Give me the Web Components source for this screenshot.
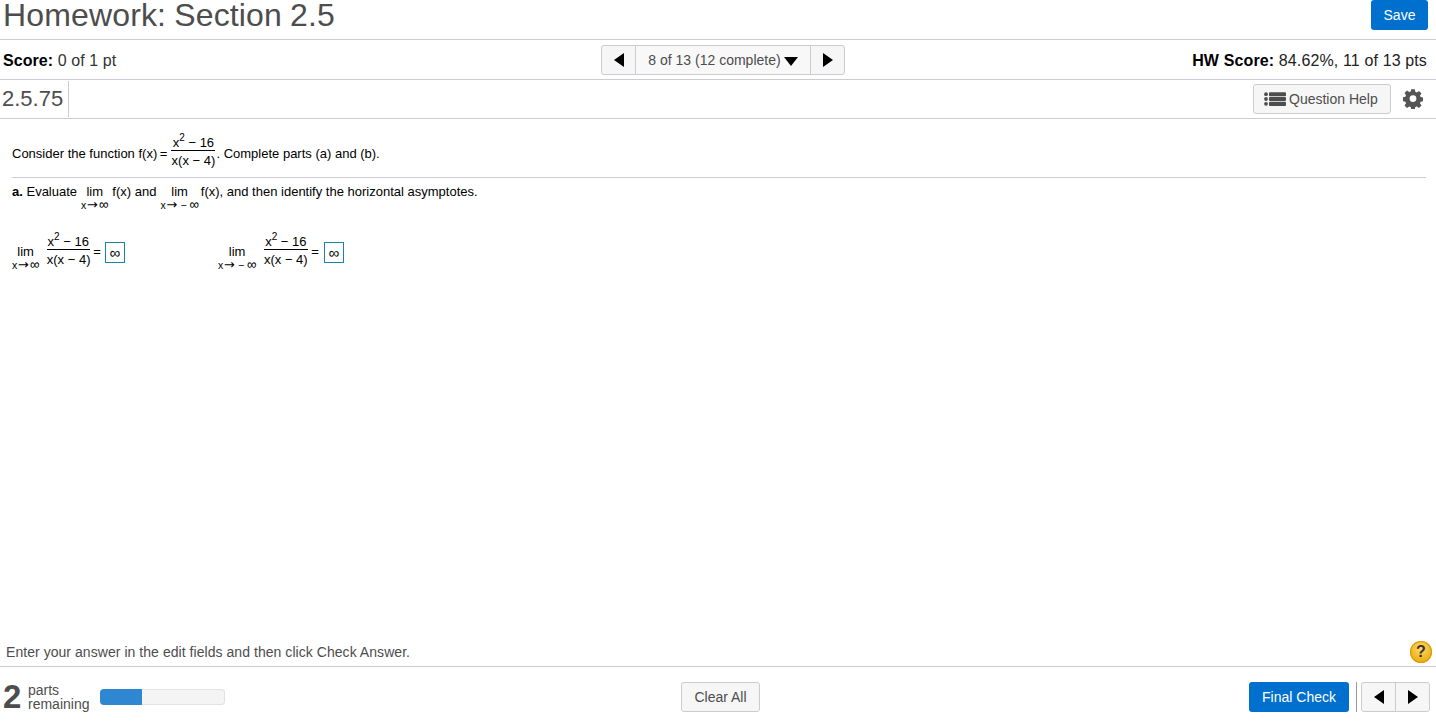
<!DOCTYPE html>
<html lang="en"><head><meta charset="utf-8"><title>Homework: Section 2.5</title>
<style>
html,body{margin:0;padding:0;height:100%;background:#fff;overflow:hidden}
body{font-family:"Liberation Sans",Arial,sans-serif;color:#000}
</style></head><body>
<hw-app>
  <hw-header title-text="Homework: Section 2.5"></hw-header>
  <hw-scorebar></hw-scorebar>
  <hw-qbar></hw-qbar>
  <hw-problem></hw-problem>
  <hw-instruction></hw-instruction>
  <hw-footer></hw-footer>
</hw-app>
<script>
const tri = {
  l:'<svg width="10" height="14" viewBox="0 0 10 14"><path d="M10 0V14L0 7Z" fill="#000"/></svg>',
  r:'<svg width="10" height="14" viewBox="0 0 10 14"><path d="M0 0V14L10 7Z" fill="#000"/></svg>',
  d:'<svg width="14" height="9" viewBox="0 0 14 9" style="margin-top:2px"><path d="M0 0H14L7 9Z" fill="#000"/></svg>'
};
function def(name, css, html){
  customElements.define(name, class extends HTMLElement{
    constructor(){super();this.attachShadow({mode:'open'});}
    connectedCallback(){
      const h = typeof html==='function'?html(this):html;
      this.shadowRoot.innerHTML='<style>'+css+'</style>'+h;
    }
  });
}
def('hw-app',':host{display:flex;flex-direction:column;height:727px;width:1436px}','<slot></slot>');
def('m-frac',`:host{display:inline-flex;flex-direction:column;align-items:stretch;text-align:center;width:44px;font-size:13px;line-height:15px;color:#000;flex:none}
 .n{border-bottom:1px solid #000;height:17px;display:flex;align-items:flex-end;justify-content:center;white-space:pre}
 .d{padding-top:2px;white-space:pre}
 sup{font-size:10px;line-height:0;vertical-align:6px}`,
 `<div class="n"><span>x<sup>2</sup> − 16</span></div><div class="d">x(x − 4)</div>`);
def('m-lim',`:host{display:inline-flex;flex-direction:column;align-items:center;font-size:13px;line-height:15px;height:15px;color:#000;flex:none}
 .s{font-size:10.5px;line-height:12px;height:17px;white-space:pre;display:flex;align-items:center}
 .i{font-size:13.5px;line-height:12px}
 .ar{font:13px/12px "DejaVu Sans",sans-serif;margin:0 1px 0 .5px}
 .mn{margin:0 2.5px;font-size:10.5px}`,
 t=>{const neg=t.hasAttribute('neg');return `<div>lim</div><div class="s"><span>x</span><span class="ar">→</span>${neg?'<span class="mn">−</span>':''}<span class="i">∞</span></div>`});
def('m-box',`:host{display:inline-flex;align-items:center;justify-content:center;box-sizing:border-box;width:20px;height:21px;border:1px solid #1583ad;font:15px "Liberation Sans",Arial,sans-serif;color:#000;flex:none;margin-top:6px}`,'∞');
def('hw-header',`:host{display:flex;align-items:flex-start;justify-content:space-between;height:39px;border-bottom:1px solid #c9ccd8;flex:none;padding:0 8px 0 3px}
 h1{margin:0;font-weight:400;font-size:32px;line-height:30px;color:#4d4d4d;letter-spacing:.15px;word-spacing:-1px;white-space:pre}
 button{font:14px "Liberation Sans",Arial,sans-serif;color:#fff;background:#0070cf;border:0;border-radius:3px;width:57px;height:30px;padding:0}`,
 t=>`<h1>${t.getAttribute('title-text')}</h1><button>Save</button>`);
def('hw-scorebar',`:host{display:grid;grid-template-columns:598px 244px 1fr;align-items:center;height:38px;padding-top:1px;border-bottom:1px solid #c9ccd8;flex:none;padding-right:9px;padding-left:3px;font-size:16px;color:#333}
 b{color:#000}
 .s{padding-top:1px;letter-spacing:.07px}
 .r{text-align:right;letter-spacing:.13px;color:#222;padding-top:1px}
 .nav{display:flex;height:30px;box-sizing:border-box;border:1px solid #ccc;border-radius:3px;background:#f6f6f6;font-size:14px;color:#4d4d4d}
 .nav>div{display:flex;align-items:center;justify-content:center}
 .a{width:33px}
 .m{flex:1;border-left:1px solid #ccc;border-right:1px solid #ccc;background:#f8f8f8;gap:3px}`,
 `<div class="s"><b>Score:</b> 0 of 1 pt</div>
 <div class="nav"><div class="a">${tri.l}</div><div class="m"><span>8 of 13 (12 complete)</span>${tri.d}</div><div class="a">${tri.r}</div></div>
 <div class="r"><b>HW Score:</b> 84.62%, 11 of 13 pts</div>`);
def('hw-qbar',`:host{display:flex;align-items:center;justify-content:space-between;height:38px;border-bottom:1px solid #c9ccd8;flex:none;padding:0 13px 0 2px}
 .id{font-size:22px;color:#4d4d4d;height:36px;line-height:36px;padding-right:5px;border-right:1px solid #ccc;align-self:flex-start;margin-top:1px}
 .right{display:flex;align-items:center;gap:12px}
 button{display:flex;align-items:center;gap:3px;box-sizing:border-box;width:138px;height:30px;padding:0 0 0 10px;font:14px "Liberation Sans",Arial,sans-serif;color:#4d4d4d;background:#f6f6f6;border:1px solid #ccc;border-radius:3px}`,
 `<div class="id">2.5.75</div><div class="right"><button>
 <svg width="22" height="14" viewBox="0 0 22 14" fill="#4d4d4d"><circle cx="2" cy="2.2" r="1.9"/><circle cx="2" cy="7" r="1.9"/><circle cx="2" cy="11.8" r="1.9"/><rect x="5" y="0.2" width="17" height="4.1" rx="1"/><rect x="5" y="5" width="17" height="4.1" rx="1"/><rect x="5" y="9.8" width="17" height="4.1" rx="1"/></svg>
 <span>Question Help</span></button>
 <svg width="20" height="20" viewBox="0 0 20 20"><path fill="#555" fill-rule="evenodd" d="M8.2 0.6h3.6l.5 2.6 1.5.6 2.2-1.5 2.5 2.5-1.5 2.2.6 1.5 2.6.5v3.6l-2.6.5-.6 1.5 1.5 2.2-2.5 2.5-2.2-1.5-1.5.6-.5 2.6H8.2l-.5-2.6-1.5-.6-2.2 1.5-2.5-2.5 1.5-2.2-.6-1.5-2.6-.5V8.6l2.6-.5.6-1.5-1.5-2.2 2.5-2.5 2.2 1.5 1.5-.6zM10 6.6a3.4 3.4 0 1 0 0 6.8 3.4 3.4 0 0 0 0-6.8z" transform="translate(0 -.4)"/></svg>
 </div>`);
def('hw-problem',`:host{display:flex;flex-direction:column;flex:1;padding:0 10px 0 12px;font-size:13px;color:#000;min-height:0}
 .intro{display:flex;align-items:center;height:58px;white-space:pre;flex:none;padding-top:10px;box-sizing:border-box}
 .intro m-frac{margin:0 1px 6px 4px}
 hr{margin:0;border:0;border-top:1px solid #c9ccd8;flex:none}
 .a{display:flex;align-items:flex-start;height:53px;padding-top:6px;box-sizing:border-box;white-space:pre;line-height:15px;flex:none}
 .a m-lim{margin:0 4px}
 .a m-lim[neg]{margin-right:2px}
 .limits{display:flex;gap:93px}
 .g{display:flex;align-items:center;height:36px}
 .g m-lim{margin:13px 7.5px 0 0;align-self:flex-start}
 .g m-frac{width:43px}
 .eq{margin:5px 4px 0 3.5px}
 .g+.g m-frac{width:44px}
 .g+.g .eq{margin-right:5px}`,
 `<div class="intro"><span>Consider the function f(x)\u2009=</span><m-frac></m-frac><span>. Complete parts (a) and (b).</span></div><hr>
 <div class="a"><span><b>a.</b> Evaluate</span><m-lim></m-lim><span>f(x) and</span><m-lim neg></m-lim><span>f(x), and then identify the horizontal asymptotes.</span></div>
 <div class="limits"><div class="g"><m-lim></m-lim><m-frac></m-frac><span class="eq">=</span><m-box></m-box></div>
 <div class="g"><m-lim neg></m-lim><m-frac></m-frac><span class="eq">=</span><m-box></m-box></div></div>`);
def('hw-instruction',`:host{display:flex;align-items:center;justify-content:space-between;height:28px;padding:4px 4px 0 6px;flex:none;border-bottom:1px solid #c9ccd8;font-size:14px;color:#4d4d4d;letter-spacing:.05px}
 .q{width:22px;height:22px;border-radius:50%;background:radial-gradient(circle at 50% 35%,#ffdc6a,#e9a400 85%);box-shadow:inset 0 0 0 1px #d99a10;color:#333;font-weight:700;font-size:16px;display:flex;align-items:center;justify-content:center}`,
 `<span>Enter your answer in the edit fields and then click Check Answer.</span><div class="q">?</div>`);
def('hw-footer',`:host{display:grid;grid-template-columns:677px 79px 1fr;align-items:center;height:60px;flex:none;padding:0 6px 0 4px;box-sizing:border-box;color:#4d4d4d}
 .l{display:flex;align-items:center}
 .n{font-size:33px;font-weight:700;width:25px;margin-left:-1px;line-height:30px}
 .t{font-size:14px;line-height:14px;width:72px}
 .bar{width:125px;height:16px;border-radius:4px;background:#f4f4f4;box-shadow:inset 0 0 0 1px #e2e2e2;overflow:hidden}
 .bar i{display:block;width:42px;height:16px;background:#2f86d1}
 button{font:14px "Liberation Sans",Arial,sans-serif;border-radius:3px;box-sizing:border-box;height:30px;padding:0}
 .clear{width:79px;background:#f6f6f6;border:1px solid #ccc;color:#4d4d4d}
 .r{display:flex;justify-content:flex-end;align-items:center}
 .final{width:100px;background:#0070cf;border:0;color:#fff}
 .sep{width:1px;height:30px;background:#999;margin:0 4px 0 7px}
 .nav{display:flex;height:30px;box-sizing:border-box;border:1px solid #ccc;border-radius:3px;background:#f6f6f6;width:69px}
 .nav div{flex:1;display:flex;align-items:center;justify-content:center}
 .nav div+div{border-left:1px solid #ccc}`,
 `<div class="l"><div class="n">2</div><div class="t">parts<br>remaining</div><div class="bar"><i></i></div></div>
 <button class="clear">Clear All</button>
 <div class="r"><button class="final">Final Check</button><div class="sep"></div><div class="nav"><div>${tri.l}</div><div>${tri.r}</div></div></div>`);
</script>
</body></html>
